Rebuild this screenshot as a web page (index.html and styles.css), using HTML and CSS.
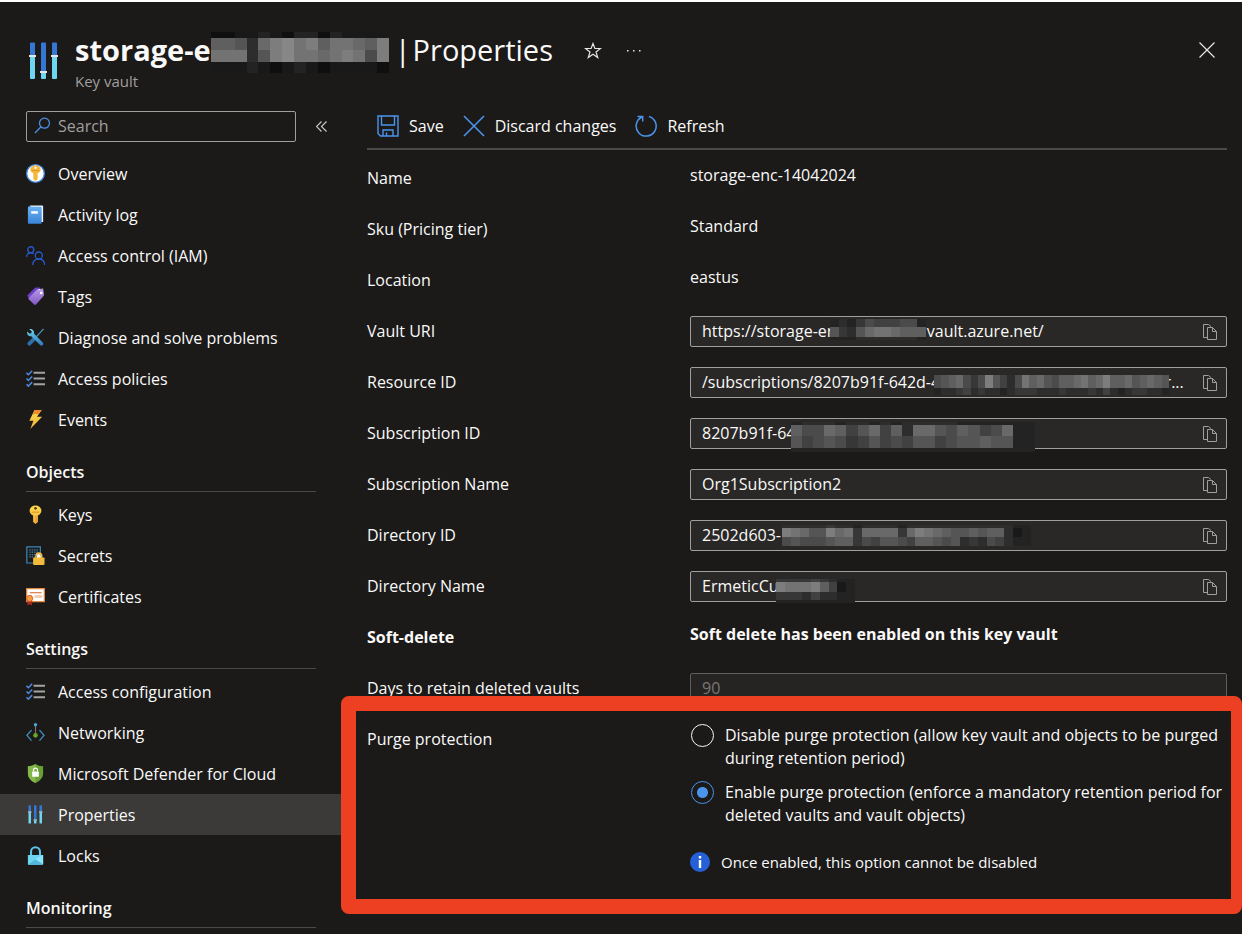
FILE: index.html
```html
<!DOCTYPE html>
<html lang="en">
<head>
  <meta charset="UTF-8">
  <meta name="viewport" content="width=device-width, initial-scale=1.0">
  <title>Key vault | Properties</title>
  <link rel="stylesheet" href="styles.css">
</head>
<body>
  <!-- Shared icons -->
  <svg class="sprite" aria-hidden="true">
    <defs>
      <linearGradient id="cyan" x1="0" y1="0" x2="0" y2="1"><stop offset="0" stop-color="#5ab4d6"/><stop offset="1" stop-color="#76e4fb"/></linearGradient>
      <linearGradient id="gold" x1="0" y1="0" x2="0" y2="1"><stop offset="0" stop-color="#fbdc4c"/><stop offset="1" stop-color="#f3b13c"/></linearGradient>
      <linearGradient id="blue" x1="0" y1="0" x2="0" y2="1"><stop offset="0" stop-color="#69b1f3"/><stop offset="1" stop-color="#3c84d8"/></linearGradient>
      <linearGradient id="purple" x1="0" y1="0" x2="0" y2="1"><stop offset="0" stop-color="#b79be8"/><stop offset="1" stop-color="#8257c4"/></linearGradient>
      <linearGradient id="tool" x1="0" y1="0" x2="0" y2="1"><stop offset="0" stop-color="#6ad6ee"/><stop offset="1" stop-color="#2f77bb"/></linearGradient>
    </defs>
    <symbol id="sliders" viewBox="0 0 30 38">
      <path fill="#3577d4" d="M1 1.500a1 1 0 0 1 1-1h3a1 1 0 0 1 1 1V14H1zM12 1.500a1 1 0 0 1 1-1h3a1 1 0 0 1 1 1V29h-5zM23 1.500a1 1 0 0 1 1-1h3a1 1 0 0 1 1 1V14h-5z"/>
      <path fill="#6fd6f0" d="M1 15h5v21a1 1 0 0 1-1 1H2a1 1 0 0 1-1-1zM12 31h5v5a1 1 0 0 1-1 1h-3a1 1 0 0 1-1-1zM23 15h5v21a1 1 0 0 1-1 1h-3a1 1 0 0 1-1-1z"/>
      <path fill="#e6e6e6" d="M0 13h7v2H0zM11 29h7v2h-7zM22 13h7v2h-7z"/>
    </symbol>
    <symbol id="key" viewBox="0 0 20 20">
      <path fill="url(#gold)" d="M10 0.500c3.500 0 6.200 2.400 6.200 5.500 0 2.300-1.500 4-3.700 5v7L10 20l-2.500-2v-7C5.300 10 3.800 8.300 3.800 6 3.800 2.900 6.500.5 10 .5z"/>
      <circle cx="10" cy="3.500" r="1.400" fill="#5b3d10"/>
      <path stroke="#e08b25" d="M6 7.500h8M10.500 11v7"/>
    </symbol>
    <symbol id="checks" viewBox="0 0 20 18">
      <path fill="none" stroke="#4a8ae0" stroke-width="1.600" d="M.5 3l2 2L6.500.8M.5 9l2 2 4-4.200M.5 15l2 2 4-4.200"/>
      <path stroke="#a3a3a3" stroke-width="2" d="M8 3h12M8 9h12M8 15h12"/>
    </symbol>
    <symbol id="copy" viewBox="0 0 16 18">
      <path fill="none" stroke="#a19f9d" d="M5 14.500H1.500v-13h5l2.500 2M5.500 4.500h5l4 4v8h-9zM10.500 4.500v4h4"/>
    </symbol>
  </svg>

  <header class="header">
    <svg class="header-icon"><use href="#sliders"/></svg>
    <div class="header-text">
      <h1 class="title"><strong>storage-e</strong><span class="mosaic title-mosaic" data-heights="6 12 12 11" data-rows="001121022021111 88739bcab8aa98b aaa37bcaa9aba6b 111210121011110"></span><span class="title-bar">|</span><span>Properties</span></h1>
      <div class="subtitle">Key vault</div>
    </div>
    <div class="header-actions">
      <button class="icon-button" aria-label="Add to favorites"><svg width="18" height="18" viewBox="0 0 18 18"><path fill="none" stroke="#e8e6e4" stroke-width="1.200" d="M9 1.500l1.900 5h5.600l-4.500 3.400 1.700 5.600L9 12.200l-4.700 3.300L6 9.900 1.500 6.500h5.600z"/></svg></button>
      <button class="icon-button" aria-label="More"><svg width="16" height="18" viewBox="0 0 16 18"><path fill="#e8e6e4" d="M1 8h1.500v1.500H1zM7 8h1.500v1.500H7zM13 8h1.500v1.500H13z"/></svg></button>
    </div>
    <button class="icon-button close" aria-label="Close"><svg width="16" height="16" viewBox="0 0 16 16"><path stroke="#e8e6e4" stroke-width="1.200" d="M.5.5l15 15M15.500.5l-15 15"/></svg></button>
  </header>

  <div class="layout">
    <nav class="sidebar">
      <div class="search-row">
        <label class="search">
          <svg width="17" height="17" viewBox="0 0 17 17"><g fill="none" stroke="#4a8fe4" stroke-width="1.300"><circle cx="10.500" cy="6.200" r="5"/><path d="M7 9.800L1 16"/></g></svg>
          <input type="text" placeholder="Search" aria-label="Search">
        </label>
        <button class="icon-button" aria-label="Collapse menu"><svg width="11" height="11" viewBox="0 0 11 11"><path fill="none" stroke="#c8c6c4" stroke-width="1.200" d="M5.500.5l-5 5 5 5M10.500.5l-5 5 5 5"/></svg></button>
      </div>

      <a class="nav-item" href="#">
        <svg class="nav-icon" viewBox="0 0 20 20"><circle cx="10" cy="10" r="9.300" fill="#fff" stroke="#3f86d9" stroke-width="1.400"/><path fill="#f4b93c" d="M10 1.500c3 0 5.500 1.800 5.500 4.300 0 1.800-1.200 3.200-3.200 3.900V16L10 18l-2.300-2V9.700c-2-.7-3.200-2.100-3.200-3.900 0-2.500 2.500-4.300 5.500-4.300z"/><circle cx="10" cy="4" r="1.200" fill="#fff"/><path stroke="#dd8f26" d="M6.500 7h7"/></svg>
        Overview
      </a>
      <a class="nav-item" href="#">
        <svg class="nav-icon" viewBox="0 0 20 20"><path fill="#e9f3fd" d="M4 .5h13a1 1 0 0 1 1 1V18h-2z"/><path fill="#3a7fd0" d="M2 1.500L4 .5V2z"/><rect x="2" y="1.800" width="14.500" height="18" rx="1" fill="url(#blue)"/><path fill="#fff" d="M5.500 6.500h7v2.600h-7z"/></svg>
        Activity log
      </a>
      <a class="nav-item" href="#">
        <svg class="nav-icon" viewBox="0 0 20 20"><g fill="none" stroke="#2559cc" stroke-width="1.400"><circle cx="5" cy="4" r="3.200"/><path d="M.7 11.500c0-2.700 1.800-4.400 4.300-4.400 1.200 0 2.200.4 3 1.100"/><circle cx="13.500" cy="10" r="3.700"/><path d="M7 20c.3-3.700 2.800-6.300 6.400-6.300S19.400 16.300 19.700 20"/></g></svg>
        Access control (IAM)
      </a>
      <a class="nav-item" href="#">
        <svg class="nav-icon" viewBox="0 0 20 20"><path fill="#6f3fc9" d="M1.300 9L9 1.200A2 2 0 0 1 10.500.5H15L3.500 12.500z"/><path fill="url(#purple)" d="M2.800 11.500L12 2.300l6-.8 1 6.500c0 .7-.2 1.300-.7 1.700L10.500 18.500a1.500 1.500 0 0 1-2 0l-5.700-5.600a1 1 0 0 1 0-1.400z"/><circle cx="16" cy="6.200" r="1.400" fill="#fff"/><circle cx="14" cy="2.700" r=".8" fill="#fff"/></svg>
        Tags
      </a>
      <a class="nav-item" href="#">
        <svg class="nav-icon" viewBox="0 0 20 20"><path stroke="#4a9fc0" stroke-width="1.200" d="M18.500 1L11 9"/><path stroke="#2f6fb0" stroke-width="4" stroke-linecap="round" d="M8.500 11.500L3.500 16.500"/><path fill="url(#tool)" d="M3.500 1.200l2.500 2.300-.4 2-2 .4L1.300 3.600C.6 6.600 2.500 8.900 5.500 8.700L14.800 18c.8.8 2 .8 2.800 0s.8-2 0-2.800L8.500 6C8.900 3 6.500.6 3.500 1.200z"/></svg>
        Diagnose and solve problems
      </a>
      <a class="nav-item" href="#"><svg class="nav-icon"><use href="#checks"/></svg>Access policies</a>
      <a class="nav-item" href="#">
        <svg class="nav-icon" viewBox="0 0 20 20"><path fill="url(#gold)" d="M9 0h7.500L11.500 7H17L4.500 20l3.300-8.700H3.500z"/><path fill="#f08a2c" d="M9 0h7.500l-3 4.200-6.300.4z"/></svg>
        Events
      </a>

      <h2 class="nav-heading">Objects</h2>
      <a class="nav-item" href="#"><svg class="nav-icon"><use href="#key"/></svg>Keys</a>
      <a class="nav-item" href="#">
        <svg class="nav-icon" viewBox="0 0 20 20"><path fill="none" stroke="#3c86b8" stroke-width="1.300" d="M.9.9h14.200v17H.9z"/><path stroke="#3f7fb0" stroke-width="1.300" stroke-dasharray="1.500 1" d="M3.500 4h9.500M3.500 6.500h9.500M3.500 9h9.500M3.500 11.500h6"/><path fill="none" stroke="#f4b93c" stroke-width="1.600" d="M10.500 13v-2.500a3 3 0 0 1 6 0V13"/><path fill="#fff" d="M11.500 10.500a2 2 0 0 1 4 0v2h-4z"/><rect x="7.500" y="12" width="12" height="8" rx="1" fill="#f2bb3e"/></svg>
        Secrets
      </a>
      <a class="nav-item" href="#">
        <svg class="nav-icon" viewBox="0 0 20 20"><path fill="#fff" stroke="#e38a3a" stroke-width="1.300" d="M.7 1.700h18.600v13.600H.7z"/><path stroke="#d9763c" stroke-width="1.200" d="M4 6h12.500"/><path fill="#f0cdb0" d="M9 8.500h8v3H9z"/><path fill="#a82a20" d="M1.500 13.500h4.800v6l-2.400-1.400-2.400 1.400z"/><circle cx="3.900" cy="12" r="3.200" fill="#f2a03d" stroke="#dc5b33"/></svg>
        Certificates
      </a>

      <h2 class="nav-heading">Settings</h2>
      <a class="nav-item" href="#"><svg class="nav-icon"><use href="#checks"/></svg>Access configuration</a>
      <a class="nav-item" href="#">
        <svg class="nav-icon" viewBox="0 0 20 20"><path fill="none" stroke="#3f8fbf" stroke-width="1.400" d="M5.800 7.500L1 13l4.800 5.500M14.200 7.500L19 13l-4.800 5.500"/><path stroke="#777" stroke-width="1.200" d="M10 3v9"/><circle cx="10" cy="1.800" r="1.800" fill="#4ba3d8"/><circle cx="10" cy="13" r="2.400" fill="#6aa528"/></svg>
        Networking
      </a>
      <a class="nav-item" href="#">
        <svg class="nav-icon" viewBox="0 0 20 20"><path fill="#6a9f35" d="M10 0c2.500 1.800 5 2.300 8 2.400V10c0 5-4 8-8 10-4-2-8-5-8-10V2.400C5 2.300 7.500 1.800 10 0z"/><path fill="#84b84a" d="M10 0v20c-4-2-8-5-8-10V2.400C5 2.300 7.500 1.800 10 0z"/><rect x="6.500" y="8" width="7" height="5.500" rx=".6" fill="#fff"/><path fill="none" stroke="#fff" stroke-width="1.300" d="M7.900 8V6.500a2.100 2.100 0 0 1 4.200 0V8"/></svg>
        Microsoft Defender for Cloud
      </a>
      <a class="nav-item selected" href="#"><svg class="nav-icon"><use href="#sliders"/></svg>Properties</a>
      <a class="nav-item" href="#">
        <svg class="nav-icon" viewBox="0 0 20 20"><path fill="none" stroke="#5cc4e8" stroke-width="2.200" d="M5.300 10V6a4.700 4.700 0 0 1 9.400 0v4"/><rect x="2" y="9.500" width="16" height="10.300" rx=".6" fill="#6fd4f0"/><path fill="#8be6fa" d="M18 9.500v9.500L9 14z"/><path fill="#52b6dc" d="M2 19.800l8-5.800 8 5.800z"/></svg>
        Locks
      </a>

      <h2 class="nav-heading">Monitoring</h2>
    </nav>

    <main class="content">
      <div class="toolbar">
        <button class="tool-button"><svg width="22" height="22" viewBox="0 0 22 22"><path fill="none" stroke="#4a94ec" stroke-width="1.400" d="M1 1h20v20H3.500L1 18.500zM4.500 1v9h13V1M6 21v-6h10v6M9.500 21v-3.500"/></svg>Save</button>
        <button class="tool-button"><svg width="22" height="22" viewBox="0 0 22 22"><path stroke="#4a94ec" stroke-width="1.600" d="M1 1l20 20M21 1L1 21"/></svg>Discard changes</button>
        <button class="tool-button"><svg width="22" height="22" viewBox="0 0 22 22"><path fill="none" stroke="#4a94ec" stroke-width="1.500" d="M14 1.500A10 10 0 1 1 7 2M2.500 1.500h5.200v5"/></svg>Refresh</button>
      </div>

      <div class="form">
        <div class="row"><span class="label">Name</span><span class="text">storage-enc-14042024</span></div>
        <div class="row"><span class="label">Sku (Pricing tier)</span><span class="text">Standard</span></div>
        <div class="row"><span class="label">Location</span><span class="text">eastus</span></div>
        <div class="row">
          <label class="label" for="vault-uri">Vault URI</label>
          <div class="field">
            <input type="text" id="vault-uri" readonly value="https://storage-enc-14042024.vault.azure.net/">
            <span class="mosaic uri-mosaic" data-heights="8 10 3" data-rows="23246555662 74379aa9888 22233333332"></span>
            <button class="copy" aria-label="Copy"><svg width="16" height="18"><use href="#copy"/></svg></button>
          </div>
        </div>
        <div class="row">
          <label class="label" for="resource-id">Resource ID</label>
          <div class="field">
            <input type="text" id="resource-id" readonly value="/subscriptions/8207b91f-642d-4                                                      r...">
            <span class="mosaic resource-mosaic" data-heights="13 7" data-rows="6789646b7536a8976889a89b88978987 23345343323444333433343532344332"></span>
            <button class="copy" aria-label="Copy"><svg width="16" height="18"><use href="#copy"/></svg></button>
          </div>
        </div>
        <div class="row">
          <label class="label" for="subscription-id">Subscription ID</label>
          <div class="field">
            <input type="text" id="subscription-id" readonly value="8207b91f-64">
            <span class="mosaic subscription-mosaic" data-heights="3 11 12 4" data-rows="2333233232333332222222 8669857958399768756922 7567645756577567787722 2222222222222222222222"></span>
            <button class="copy" aria-label="Copy"><svg width="16" height="18"><use href="#copy"/></svg></button>
          </div>
        </div>
        <div class="row">
          <label class="label" for="subscription-name">Subscription Name</label>
          <div class="field">
            <input type="text" id="subscription-name" readonly value="Org1Subscription2">
            <button class="copy" aria-label="Copy"><svg width="16" height="18"><use href="#copy"/></svg></button>
          </div>
        </div>
        <div class="row">
          <label class="label" for="directory-id">Directory ID</label>
          <div class="field">
            <input type="text" id="directory-id" readonly value="2502d603-">
            <span class="mosaic directory-mosaic" data-heights="3 9 9" data-rows="3333343323333233333333333322 ba977b9a4999949ba98778788312 6766678846577658876734365322"></span>
            <button class="copy" aria-label="Copy"><svg width="16" height="18"><use href="#copy"/></svg></button>
          </div>
        </div>
        <div class="row">
          <label class="label" for="directory-name">Directory Name</label>
          <div class="field">
            <input type="text" id="directory-name" readonly value="ErmeticCu">
            <span class="mosaic name-mosaic" data-heights="3 10 8 3" data-rows="444454322 baaab8512 444353322 222222222"></span>
            <button class="copy" aria-label="Copy"><svg width="16" height="18"><use href="#copy"/></svg></button>
          </div>
        </div>
        <div class="row bold"><span class="label">Soft-delete</span><span class="text">Soft delete has been enabled on this key vault</span></div>
        <div class="row">
          <label class="label" for="days">Days to retain deleted vaults</label>
          <div class="field disabled"><input type="text" id="days" disabled value="90"></div>
        </div>
        <div class="row purge">
          <span class="label" id="purge-label">Purge protection</span>
          <div class="options" role="radiogroup" aria-labelledby="purge-label">
            <label class="option"><input type="radio" name="purge">Disable purge protection (allow key vault and objects to be purged during retention period)</label>
            <label class="option"><input type="radio" name="purge" checked>Enable purge protection (enforce a mandatory retention period for deleted vaults and vault objects)</label>
            <div class="info">
              <svg width="20" height="20" viewBox="0 0 20 20"><circle cx="10" cy="10" r="10" fill="#2560d8"/><path fill="#fff" d="M8.800 4h2.400v2.400H8.800zM8.800 8h2.400v8H8.800z"/></svg>
              Once enabled, this option cannot be disabled
            </div>
          </div>
        </div>
      </div>
    </main>
  </div>
  <script src="script.js"></script>
</body>
</html>
```
FILE: styles.css
```css
*, *::before {
  box-sizing: border-box;
}
body {
  margin: 0;
  height: 100vh;
  overflow: hidden;
  border-top: 2px solid #fff;
  background-color: #1b1a19;
  color: #faf9f8;
  font-family: "Open Sans", "Noto Sans", sans-serif;
  font-size: 16px;
  line-height: 24px;
}
button, input {
  font: inherit;
  color: inherit;
}
button {
  background: none;
  border: none;
  padding: 0;
  cursor: pointer;
}
svg {
  display: block;
  flex: none;
}
.sprite {
  position: absolute;
  width: 0;
  height: 0;
}

/* Header */
.header {
  display: flex;
  align-items: flex-start;
  padding: 27px 27px 0 29px;
}
.header-icon {
  width: 30px;
  height: 38px;
  margin: 13px 16px 0 0;
}
.title {
  display: flex;
  align-items: center;
  margin: 0;
  font-size: 29px;
  font-weight: 400;
  line-height: 40px;
}
.title strong {
  font-weight: 700;
}
.title-bar {
  margin: 0 2px 0 6px;
}
.subtitle {
  color: #a19f9d;
  font-size: 15px;
  line-height: 22px;
}
.header-actions {
  display: flex;
  gap: 24px;
  margin: 13px 0 0 31px;
}
.close {
  margin: 13px 0 0 auto;
}

/* Pixelated parts */
.mosaic svg {
  width: 100%;
  height: 100%;
}
.title-mosaic {
  width: 178px;
  height: 41px;
  margin: 3px 0 -3px;
}
.field .mosaic {
  position: absolute;
}
.uri-mosaic {
  left: 139px;
  top: 2px;
  width: 96px;
  height: 21px;
}
.resource-mosaic {
  left: 243px;
  top: 7px;
  width: 235px;
  height: 20px;
}
.subscription-mosaic {
  left: 100px;
  top: 3px;
  width: 244px;
  height: 30px;
}
.directory-mosaic {
  left: 91px;
  top: 4px;
  width: 249px;
  height: 21px;
}
.name-mosaic {
  left: 85px;
  top: 7px;
  width: 79px;
  height: 24px;
}

/* Sidebar */
.layout {
  display: flex;
  margin-top: 19px;
}
.sidebar {
  flex: none;
  width: 342px;
}
.search-row {
  display: flex;
  align-items: center;
  gap: 20px;
  margin-bottom: 11px;
  padding-left: 26px;
}
.search {
  display: flex;
  align-items: center;
  gap: 7px;
  width: 270px;
  height: 31px;
  padding: 0 7px 2px;
  border: 1px solid #a19f9d;
  border-radius: 2px;
}
.search input {
  flex: 1;
  min-width: 0;
  padding: 0;
  border: none;
  outline: none;
  background: none;
}
.search input::placeholder {
  color: #a19f9d;
}
.nav-item {
  display: flex;
  align-items: center;
  gap: 13px;
  height: 41px;
  padding-left: 26px;
  color: inherit;
  text-decoration: none;
}
.nav-item.selected {
  background-color: #3b3a39;
}
.nav-icon {
  width: 19px;
  height: 19px;
}
.nav-heading {
  margin: 0 26px 2px;
  padding: 20px 0 7px;
  border-bottom: 1px solid #4b4a48;
  font-size: 16px;
  font-weight: 600;
}

/* Content */
.content {
  flex: 1;
  padding: 0 15px 0 25px;
}
.toolbar {
  display: flex;
  gap: 19px;
  height: 39px;
  padding-left: 10px;
  border-bottom: 2px solid #4b4a48;
}
.tool-button {
  display: flex;
  align-items: center;
  gap: 10px;
  height: 29px;
}
.form {
  padding-top: 3px;
}
.row {
  display: flex;
  align-items: center;
  height: 51px;
}
.label {
  flex: none;
  width: 323px;
  padding-bottom: 2px;
}
.text {
  flex: 1;
  padding-bottom: 7px;
}
.bold {
  font-weight: 700;
}
.field {
  position: relative;
  display: flex;
  align-items: center;
  flex: 1;
  height: 31px;
  padding: 0 8px 0 11px;
  border: 1px solid #a19f9d;
  border-radius: 2px;
  background-color: #292827;
}
.field input {
  flex: 1;
  min-width: 0;
  padding: 0 0 2px;
  border: none;
  outline: none;
  background: none;
  text-overflow: ellipsis;
}
.field.disabled {
  border-color: #605e5c;
  background-color: #252423;
  color: #797775;
}
.copy {
  margin-left: 10px;
}

/* Purge protection, with the red frame round it */
.purge {
  position: relative;
  align-items: flex-start;
  height: auto;
  padding: 10px 0 0;
}
.purge .label {
  padding-top: 3px;
}
.purge::before {
  content: "";
  position: absolute;
  top: -18px;
  left: -26px;
  right: -15px;
  height: 218px;
  border: 15px solid #ed4023;
  border-right-width: 11px;
  border-radius: 8px;
  pointer-events: none;
}
.options {
  flex: 1;
}
.option {
  display: flex;
  gap: 11px;
  margin-bottom: 11px;
  line-height: 23px;
}
.option input {
  flex: none;
  appearance: none;
  width: 23px;
  height: 23px;
  margin: 0 0 0 1px;
  border: 1px solid #faf9f8;
  border-radius: 50%;
}
.option input:checked {
  border: 1px solid #4a94ec;
  background: radial-gradient(circle, #4a94ec 5px, transparent 6px);
}
.info {
  display: flex;
  align-items: center;
  gap: 11px;
  padding-top: 12px;
  font-size: 15px;
}
```
FILE: script.js
```javascript
// Each digit in data-rows is one grey cell, data-heights gives the height of each row
document.querySelectorAll('.mosaic').forEach(el => {
  const rows = el.dataset.rows.split(' ');
  const heights = el.dataset.heights.split(' ').map(Number);
  const total = heights.reduce((a, b) => a + b, 0);
  let y = 0;
  let rects = '';
  rows.forEach((row, i) => {
    [...row].forEach((digit, x) => {
      const grey = parseInt(digit, 16) * 10 + 15;
      rects += `<rect x="${x}" y="${y}" width="1" height="${heights[i]}" fill="rgb(${grey},${grey},${grey})"/>`;
    });
    y += heights[i];
  });
  el.innerHTML = `<svg viewBox="0 0 ${rows[0].length} ${total}" preserveAspectRatio="none" shape-rendering="crispEdges" aria-hidden="true">${rects}</svg>`;
});
```
